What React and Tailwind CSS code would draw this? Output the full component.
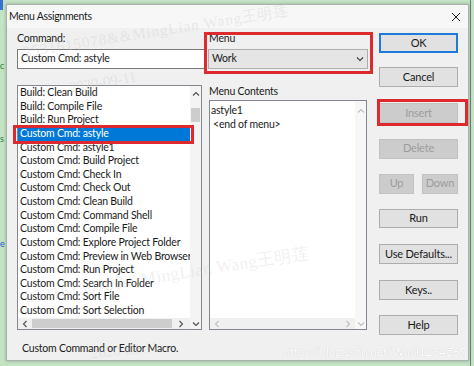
import React from "react";

const items = [
  "Build: Clean Build",
  "Build: Compile File",
  "Build: Run Project",
  "Custom Cmd: astyle",
  "Custom Cmd: astyle1",
  "Custom Cmd: Build Project",
  "Custom Cmd: Check In",
  "Custom Cmd: Check Out",
  "Custom Cmd: Clean Build",
  "Custom Cmd: Command Shell",
  "Custom Cmd: Compile File",
  "Custom Cmd: Explore Project Folder",
  "Custom Cmd: Preview in Web Browser",
  "Custom Cmd: Run Project",
  "Custom Cmd: Search In Folder",
  "Custom Cmd: Sort File",
  "Custom Cmd: Sort Selection",
];

function Btn({ children, disabled, primary, className = "" }) {
  return (
    <div
      className={
        "h-[20px] flex items-center justify-center whitespace-nowrap text-[11px] " +
        (disabled
          ? "bg-[#cccccc] border border-[#c2c2c2] text-[#9c9c9c] "
          : primary
          ? "bg-[#e1e1e1] border-2 border-[#1f7ad8] text-[#1a1a1a] "
          : "bg-[#e1e1e1] border border-[#adadad] text-[#1a1a1a] ") +
        className
      }
    >
      {children}
    </div>
  );
}

function Chev({ dir = "down", color = "#606060" }) {
  const d =
    dir === "down"
      ? "M1 2.5 L4 5.5 L7 2.5"
      : dir === "up"
      ? "M1 5.5 L4 2.5 L7 5.5"
      : dir === "left"
      ? "M5.5 1 L2.5 4 L5.5 7"
      : "M2.5 1 L5.5 4 L2.5 7";
  return (
    <svg width="8" height="8" viewBox="0 0 8 8">
      <path d={d} fill="none" stroke={color} strokeWidth="1.1" />
    </svg>
  );
}

export default function App() {
  return (
    <div className="w-[474px] h-[366px] bg-[#c3e3c4] overflow-hidden relative font-['Lato',sans-serif] text-[10.5px] tracking-[-0.2px] text-[#1a1a1a]">
      {/* left strip fragments */}
      <div className="absolute left-0 top-[0px] w-[3px] h-[10px] bg-[#3b6fd0]" />
      <div className="absolute left-0 top-[60px] w-[4px] h-[12px] text-[#2b7a3a] text-[9px] leading-[12px]">c</div>
      <div className="absolute left-0 top-[133px] w-[4px] h-[12px] text-[#2b7a3a] text-[9px] leading-[12px]">s</div>
      <div className="absolute left-0 top-[238px] w-[4px] h-[12px] text-[#2453c8] text-[9px] leading-[12px]">e</div>
      <div className="absolute right-[3px] top-0 w-[1px] h-[366px] bg-[#6c7d78]" />

      <div className="ml-[6px] mt-[4px] w-[463px] h-[357px] bg-[#f0f0f0] border border-[#a9b3ad] flex flex-col relative shadow-[0_0_3px_rgba(0,0,0,0.25)]">
        {/* title bar */}
        <div className="h-[23px] bg-[#f7f7f7] flex items-center justify-between pl-[2px] pr-[7px] shrink-0">
          <span className="text-[10.5px] tracking-[-0.3px]">Menu Assignments</span>
          <svg width="10" height="10" viewBox="0 0 10 10">
            <path d="M1 1 L9 9 M9 1 L1 9" stroke="#222" strokeWidth="1" />
          </svg>
        </div>

        {/* body */}
        <div className="flex pl-[10px] h-[307px] shrink-0">
          {/* left column */}
          <div className="w-[188px] flex flex-col">
            <div className="mt-[3px] h-[15px] leading-[15px]">Command:</div>
            <div className="mt-[3px] h-[20px] w-[188px] bg-white border border-[#7a7a7a] flex items-center px-[3px]">
              Custom Cmd: astyle
            </div>
            <div className="mt-[16px] w-[185px] h-[245px] bg-white border border-[#828790] flex">
              <div className="flex-1 min-w-0 flex flex-col">
                <div className="flex-1 overflow-hidden">
                  {items.map((t, i) => (
                    <div
                      key={t}
                      className={
                        "h-[13.64px] leading-[13.64px] pl-[2px] whitespace-nowrap overflow-hidden " +
                        (i === 3 ? "bg-[#0078d7] text-white" : "")
                      }
                    >
                      {t}
                    </div>
                  ))}
                </div>
                <div className="h-[11px] flex items-center bg-[#f0f0f0]">
                  <div className="w-[14px] flex justify-center">
                    <Chev dir="left" color="#505050" />
                  </div>
                  <div className="w-[140px] h-[9px] bg-[#cdcdcd]" />
                  <div className="flex-1 flex justify-center">
                    <Chev dir="right" color="#505050" />
                  </div>
                </div>
              </div>
              <div className="w-[11px] shrink-0 flex flex-col bg-[#f4f4f4]">
                <div className="h-[12px] flex items-center justify-center mt-[2px]">
                  <Chev dir="up" color="#505050" />
                </div>
                <div className="mt-[8px] h-[14px] bg-[#cdcdcd] mx-[1px]" />
                <div className="flex-1" />
                <div className="h-[11px] flex items-center justify-center">
                  <Chev dir="down" color="#505050" />
                </div>
              </div>
            </div>
          </div>

          {/* middle column */}
          <div className="ml-[3px] w-[160px] flex flex-col">
            <div className="mt-[3px] h-[15px] leading-[15px] pl-[1px]">Menu</div>
            <div className="mt-[3px] h-[20px] w-[160px] bg-[#e5e5e5] border border-[#adadad] flex items-center justify-between pl-[3px] pr-[3px]">
              <span>Work</span>
              <Chev dir="down" color="#404040" />
            </div>
            <div className="mt-[15px] h-[15px] leading-[15px] pl-[1px]">Menu Contents</div>
            <div className="mt-[1px] ml-[1px] w-[158px] h-[230px] bg-white border border-[#828790] flex">
              <div className="flex-1 min-w-0 flex flex-col">
                <div className="flex-1 pt-[2px] pl-[1px]">
                  <div className="h-[14px] leading-[14px]">astyle1</div>
                  <div className="h-[14px] leading-[14px] pl-[2px]">&lt;end of menu&gt;</div>
                </div>
                <div className="h-[11px] flex items-center justify-between bg-[#f0f0f0] px-[3px]">
                  <Chev dir="left" color="#c0c0c0" />
                  <Chev dir="right" color="#c0c0c0" />
                </div>
              </div>
              <div className="w-[11px] shrink-0 flex flex-col bg-[#f7f7f7]">
                <div className="h-[12px] flex items-center justify-center mt-[4px]">
                  <Chev dir="up" color="#c0c0c0" />
                </div>
                <div className="flex-1" />
                <div className="h-[11px] flex items-center justify-center">
                  <Chev dir="down" color="#c0c0c0" />
                </div>
              </div>
            </div>
          </div>

          {/* right column */}
          <div className="ml-[11px] w-[79px] flex flex-col">
            <Btn primary className="mt-[5px]">OK</Btn>
            <Btn className="mt-[14px]">Cancel</Btn>
            <Btn disabled className="mt-[16px]">Insert</Btn>
            <Btn disabled className="mt-[16px]">Delete</Btn>
            <div className="mt-[15px] flex justify-between">
              <Btn disabled className="w-[35px]">Up</Btn>
              <Btn disabled className="w-[36px]">Down</Btn>
            </div>
            <Btn className="mt-[15px]">Run</Btn>
            <Btn className="mt-[16px]">Use Defaults...</Btn>
            <Btn className="mt-[16px]">Keys..</Btn>
            <Btn className="mt-[15px]">Help</Btn>
          </div>
        </div>

        {/* status */}
        <div className="mt-[6px] pl-[15px] h-[15px] leading-[15px]">Custom Command or Editor Macro.</div>

        {/* watermarks */}
        <div className="absolute left-[18px] top-[36px] origin-bottom-left -rotate-[9deg] text-[15px] text-[#c4c4c4]/30 font-['Liberation_Serif',serif] tracking-[1px] whitespace-nowrap pointer-events-none">
          2531615078&amp;&amp;MingLian Wang王明莲
        </div>
        <div className="absolute left-[62px] top-[66px] -rotate-[9deg] text-[15px] text-[#c4c4c4]/30 font-['Liberation_Serif',serif] whitespace-nowrap pointer-events-none">
          2020-09-11
        </div>
        <div className="absolute left-[20px] top-[280px] origin-bottom-left -rotate-[9deg] text-[17px] text-[#c4c4c4]/25 font-['Liberation_Serif',serif] tracking-[0.5px] whitespace-nowrap pointer-events-none">
          2531615078&amp;&amp;MingLian Wang王明莲
        </div>
        <div className="absolute left-[84px] top-[334px] -rotate-[6deg] text-[15px] text-[#c4c4c4]/25 font-['Liberation_Serif',serif] whitespace-nowrap pointer-events-none">
          2020-09-11
        </div>
        <div className="absolute right-[2px] top-[338px] text-[12px] text-white [text-shadow:0_0_1px_rgba(0,0,0,0.2)] whitespace-nowrap pointer-events-none">
          https://blog.csdn.net/Wmll1234567
        </div>

        {/* red annotation boxes */}
        <div className="absolute left-[197px] top-[27px] w-[169px] h-[42px] border-[3px] border-[#dd2a2f] pointer-events-none" />
        <div className="absolute left-[370px] top-[94px] w-[91px] h-[27px] border-[3px] border-[#dd2a2f] pointer-events-none" />
        <div className="absolute left-[6px] top-[120px] w-[181px] h-[19px] border-[3px] border-[#dd2a2f] pointer-events-none" />
      </div>
    </div>
  );
}
